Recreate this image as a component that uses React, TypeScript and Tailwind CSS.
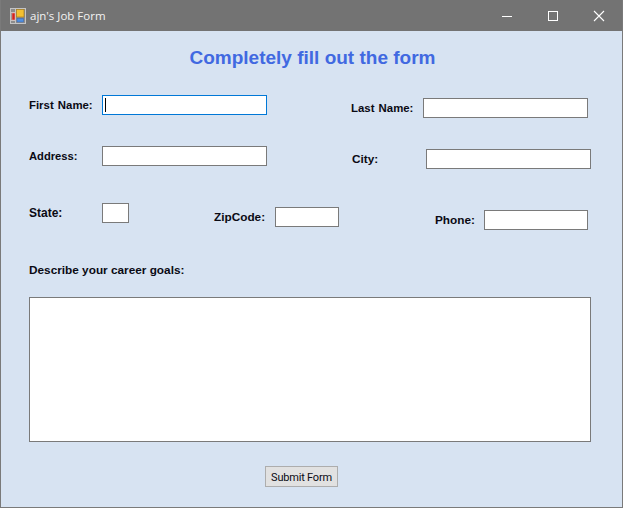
import React from "react";

const inputCls = "block h-5 bg-white border border-[#7a7a7a] shrink-0";
const labelCls = "block shrink-0 text-[11.8px] leading-5 font-bold text-[#0a0a14]";

function WinIcon() {
  return (
    <svg width="16" height="16" viewBox="0 0 16 16" className="shrink-0">
      <rect x="0.5" y="0.5" width="15" height="15" fill="#8c8c8c" stroke="#c4c4c4" />
      <path d="M0.5 4.5H5.5M5.5 0.5V15.5M0.5 12.5H5.5" stroke="#c4c4c4" strokeWidth="1" />
      <rect x="2" y="5" width="3" height="7" fill="#d02420" stroke="#f0b0a0" strokeWidth="0.5" />
      <rect x="6.5" y="1.5" width="7.5" height="7.5" fill="#f3c030" stroke="#a87f20" strokeWidth="0.7" />
      <rect x="7" y="10.5" width="6.5" height="3.5" fill="#4f8fe0" stroke="#3a62a8" strokeWidth="0.5" />
    </svg>
  );
}

export default function App() {
  return (
    <div className="w-[623px] h-[508px] flex flex-col bg-[#d7e3f2] border border-t-0 border-[#7a7a7a] font-['Liberation_Sans',Arial,sans-serif] overflow-hidden">
      <div className="h-[31px] shrink-0 bg-[#737373] flex items-center pl-[9px] text-white">
        <WinIcon />
        <span className="ml-[4px] text-[11.5px] font-['Open_Sans',sans-serif] text-[#f2f2f2]">ajn's Job Form</span>
        <div className="ml-auto flex items-center">
          <svg width="46" height="30" viewBox="0 0 46 30">
            <path d="M18 15.5H28" stroke="#fff" strokeWidth="1" />
          </svg>
          <svg width="46" height="30" viewBox="0 0 46 30">
            <rect x="18.5" y="10.5" width="9" height="9" fill="none" stroke="#fff" strokeWidth="1" />
          </svg>
          <svg width="46" height="30" viewBox="0 0 46 30">
            <path d="M18 10L28 20M28 10L18 20" stroke="#fff" strokeWidth="1.1" />
          </svg>
        </div>
      </div>

      <h1 className="mt-[15px] h-[24px] pl-[188.5px] text-[19px] leading-6 font-bold text-[#4169e1] whitespace-nowrap">
        Completely fill out the form
      </h1>

      <div className="mt-[25px] pl-[28px] flex items-start h-[23px]">
        <span className={`${labelCls} w-[73px] !text-[11.4px] [word-spacing:1px]`}>First Name:</span>
        <div className="relative w-[165px] h-5 bg-white border border-[#0078d7] shrink-0">
          <span className="absolute left-[2px] top-[2px] w-px h-[14px] bg-black" />
        </div>
        <div className="ml-[84px] mt-[3px] flex">
          <span className={`${labelCls} w-[72px] !text-[11.4px] [word-spacing:1px]`}>Last Name:</span>
          <span className={`${inputCls} w-[165px]`} />
        </div>
      </div>

      <div className="mt-[28px] pl-[28px] flex items-start h-[23px]">
        <span className={`${labelCls} w-[73px] !text-[11.2px]`}>Address:</span>
        <span className={`${inputCls} w-[165px]`} />
        <div className="ml-[85px] mt-[3px] flex">
          <span className={`${labelCls} w-[74px]`}>City:</span>
          <span className={`${inputCls} w-[165px]`} />
        </div>
      </div>

      <div className="mt-[34px] pl-[28px] flex items-start h-[27px]">
        <span className={`${labelCls} w-[73px] !text-[12px]`}>State:</span>
        <span className={`${inputCls} w-[27px]`} />
        <div className="ml-[85px] mt-[4px] flex">
          <span className={`${labelCls} w-[61px]`}>ZipCode:</span>
          <span className={`${inputCls} w-[64px]`} />
        </div>
        <div className="ml-[96px] mt-[7px] flex">
          <span className={`${labelCls} w-[49px]`}>Phone:</span>
          <span className={`${inputCls} w-[104px]`} />
        </div>
      </div>

      <div className={`${labelCls} mt-[30px] pl-[28px]`}>Describe your career goals:</div>

      <div className="mt-[17px] ml-[28px] w-[562px] h-[145px] bg-white border border-[#7a7a7a]" />

      <button className="mt-[24px] ml-[264px] w-[73px] h-[21px] pt-px bg-[#e1e1e1] border border-[#adadad] font-['Roboto',sans-serif] text-[11px] tracking-[-0.2px] leading-none text-[#0a0a14]">
        Submit Form
      </button>
    </div>
  );
}
